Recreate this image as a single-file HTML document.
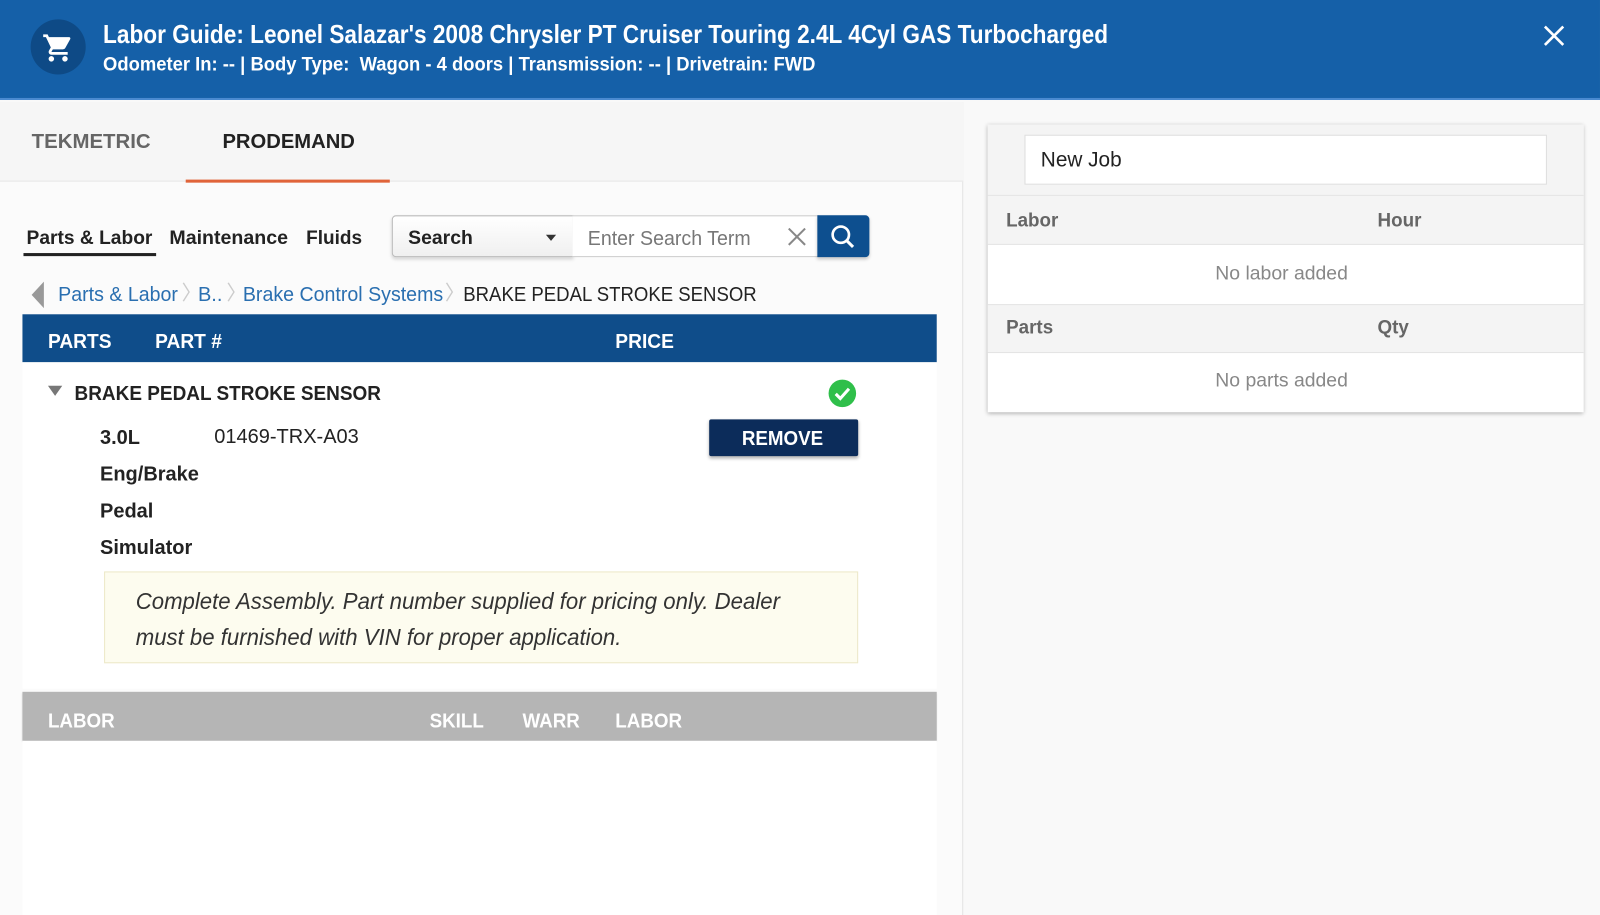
<!DOCTYPE html>
<html><head><meta charset="utf-8"><style>
*{margin:0;padding:0;box-sizing:border-box}
body{width:1600px;height:897px;overflow:hidden;background:#f9f9f9;font-family:"Liberation Sans",sans-serif;position:relative}
#w{position:absolute;left:0;top:0;width:1568px;height:879px;transform:scale(1.0204);transform-origin:0 0}
.t{position:absolute;white-space:nowrap;transform-origin:0 50%;transform:scaleX(.98);line-height:1}
.b{font-weight:bold}
</style></head><body><div id="w">
<div style="position:absolute;left:0;top:0;width:1568px;height:98px;background:#1560a8;border-bottom:2px solid #4a8ad0"></div>
<div style="position:absolute;left:30px;top:19px;width:54px;height:54px;border-radius:50%;background:#0e4a86"></div>
<svg style="position:absolute;left:41px;top:31px" width="32" height="32" viewBox="0 0 24 24"><path fill="#fff" d="M7 18c-1.1 0-2 .9-2 2s.9 2 2 2 2-.9 2-2-.9-2-2-2zM1 2v2h2l3.6 7.6-1.35 2.4C5.1 14.3 5 14.6 5 15c0 1.1.9 2 2 2h12v-2H7.4c-.14 0-.25-.11-.25-.25l.03-.12.9-1.630h7.45c.75 0 1.410-.41 1.75-1.03l3.58-6.49A1 1 0 0 0 20 4H5.2l-.94-2H1zm16 16c-1.1 0-2 .9-2 2s.9 2 2 2 2-.9 2-2-.9-2-2-2z"/></svg>
<div class="t b" style="left:101px;top:22px;font-size:25px;color:#fff;transform:scaleX(.887)">Labor Guide: Leonel Salazar's 2008 Chrysler PT Cruiser Touring 2.4L 4Cyl GAS Turbocharged</div>
<div class="t b" style="left:101px;top:54px;font-size:19px;color:#fff;transform:scaleX(.95)">Odometer In: -- | Body Type:&nbsp; Wagon - 4 doors | Transmission: -- | Drivetrain: FWD</div>
<svg style="position:absolute;left:1511px;top:23px" width="24" height="24" viewBox="0 0 24 24"><path d="M3 3L21 21M21 3L3 21" stroke="#fff" stroke-width="2.6"/></svg>
<div style="position:absolute;left:0;top:100px;width:944px;height:797px;background:#fbfbfb;border-right:1px solid #e3e3e3"></div>
<div style="position:absolute;left:0;top:100px;width:944px;height:78px;background:#f6f6f6;border-bottom:1px solid #e8e8e8"></div>
<div class="t b" style="left:31px;top:129px;font-size:20px;color:#666;transform:scaleX(1)">TEKMETRIC</div>
<div class="t b" style="left:218px;top:129px;font-size:20px;color:#222;transform:scaleX(.99)">PRODEMAND</div>
<div style="position:absolute;left:182px;top:176px;width:200px;height:3px;background:#e0643a"></div>
<div class="t b" style="left:26px;top:224px;font-size:19px;color:#222;transform:scaleX(.99)">Parts &amp; Labor</div>
<div style="position:absolute;left:23px;top:248px;width:130px;height:3px;background:#222"></div>
<div class="t b" style="left:166px;top:224px;font-size:19px;color:#222;transform:scaleX(1.01)">Maintenance</div>
<div class="t b" style="left:300px;top:224px;font-size:19px;color:#222;transform:scaleX(.98)">Fluids</div>
<div style="position:absolute;left:384px;top:211px;width:178px;height:41px;background:linear-gradient(#fff,#f0f0f0);border:1px solid #bbb;border-radius:4px 0 0 4px;box-shadow:0 2px 3px rgba(0,0,0,.15)"></div>
<div class="t b" style="left:400px;top:224px;font-size:19px;color:#222;transform:scaleX(1)">Search</div>
<div style="position:absolute;left:535px;top:230px;border:5px solid transparent;border-top:6px solid #333"></div>
<div style="position:absolute;left:561px;top:211px;width:242px;height:41px;background:#fff;border:1px solid #ccc;border-left:none"></div>
<div class="t" style="left:576px;top:224px;font-size:20px;color:#777;transform:scaleX(.96)">Enter Search Term</div>
<svg style="position:absolute;left:771px;top:222px" width="20" height="20" viewBox="0 0 20 20"><path d="M2 2L18 18M18 2L2 18" stroke="#888" stroke-width="2"/></svg>
<div style="position:absolute;left:801px;top:211px;width:51px;height:41px;background:#0d4f8f;border-radius:0 4px 4px 0;box-shadow:0 2px 3px rgba(0,0,0,.2)"></div>
<svg style="position:absolute;left:813px;top:219px" width="26" height="26" viewBox="0 0 26 26"><circle cx="11" cy="11" r="8" fill="none" stroke="#fff" stroke-width="2.6"/><path d="M17 17L23 23" stroke="#fff" stroke-width="3"/></svg>
<div style="position:absolute;left:31px;top:276px;border:9px solid transparent;border-right:12px solid #999;border-left:none;height:0;width:0;border-top-width:13px;border-bottom-width:13px"></div>
<div class="t" style="left:57px;top:279px;font-size:20px;color:#2a6fb0;transform:scaleX(.96)">Parts &amp; Labor</div>
<div class="t" style="left:178px;top:278px;font-size:20px;color:#ccc">〉</div>
<div class="t" style="left:194px;top:279px;font-size:20px;color:#2a6fb0">B..</div>
<div class="t" style="left:222px;top:278px;font-size:20px;color:#ccc">〉</div>
<div class="t" style="left:238px;top:279px;font-size:20px;color:#2a6fb0;transform:scaleX(.96)">Brake Control Systems</div>
<div class="t" style="left:436px;top:278px;font-size:20px;color:#ccc">〉</div>
<div class="t" style="left:454px;top:279px;font-size:20px;color:#222;transform:scaleX(.91)">BRAKE PEDAL STROKE SENSOR</div>
<div style="position:absolute;left:22px;top:308px;width:896px;height:47px;background:#0f4d8a"></div>
<div class="t b" style="left:47px;top:325px;font-size:20px;color:#fff;transform:scaleX(.94)">PARTS</div>
<div class="t b" style="left:152px;top:325px;font-size:20px;color:#fff;transform:scaleX(.94)">PART #</div>
<div class="t b" style="left:603px;top:325px;font-size:20px;color:#fff;transform:scaleX(.94)">PRICE</div>
<div style="position:absolute;left:22px;top:355px;width:896px;height:320px;background:#fff"></div>
<div style="position:absolute;left:47px;top:378px;border:7px solid transparent;border-top:10px solid #777;border-bottom:none"></div>
<div class="t b" style="left:73px;top:376px;font-size:20px;color:#222;transform:scaleX(.93)">BRAKE PEDAL STROKE SENSOR</div>
<div style="position:absolute;left:812px;top:372px;width:27px;height:27px;border-radius:50%;background:#2fbf4a"></div>
<svg style="position:absolute;left:812px;top:372px" width="27" height="27" viewBox="0 0 27 27"><path d="M7 14l4.5 4.5L20 9" fill="none" stroke="#fff" stroke-width="3"/></svg>
<div class="t b" style="left:98px;top:419px;font-size:20px;color:#222">3.0L</div>
<div class="t" style="left:210px;top:418px;font-size:20px;color:#222">01469-TRX-A03</div>
<div style="position:absolute;left:695px;top:411px;width:146px;height:36px;background:#0c2c5a;border-radius:2px;box-shadow:0 2px 3px rgba(0,0,0,.3)"></div>
<div class="t b" style="left:727px;top:420px;font-size:20px;color:#fff;transform:scaleX(.92)">REMOVE</div>
<div class="t b" style="left:98px;top:455px;font-size:20px;color:#222">Eng/Brake</div>
<div class="t b" style="left:98px;top:491px;font-size:20px;color:#222">Pedal</div>
<div class="t b" style="left:98px;top:527px;font-size:20px;color:#222">Simulator</div>
<div style="position:absolute;left:102px;top:560px;width:739px;height:90px;background:#fdfcef;border:1px solid #ece8c8"></div>
<div class="t" style="left:133px;top:578px;font-size:23px;color:#333;font-style:italic;transform:scaleX(.945)">Complete Assembly. Part number supplied for pricing only. Dealer</div>
<div class="t" style="left:133px;top:613px;font-size:23px;color:#333;font-style:italic;transform:scaleX(.945)">must be furnished with VIN for proper application.</div>
<div style="position:absolute;left:22px;top:678px;width:896px;height:48px;background:#b5b5b5;box-shadow:0 1px 2px rgba(0,0,0,.2)"></div>
<div class="t b" style="left:47px;top:697px;font-size:20px;color:#fff;transform:scaleX(.92)">LABOR</div>
<div class="t b" style="left:421px;top:697px;font-size:20px;color:#fff;transform:scaleX(.92)">SKILL</div>
<div class="t b" style="left:512px;top:697px;font-size:20px;color:#fff;transform:scaleX(.92)">WARR</div>
<div class="t b" style="left:603px;top:697px;font-size:20px;color:#fff;transform:scaleX(.92)">LABOR</div>
<div style="position:absolute;left:22px;top:726px;width:896px;height:171px;background:#fff"></div>
<div style="position:absolute;left:968px;top:122px;width:584px;height:282px;background:#fff;box-shadow:0 1px 4px rgba(0,0,0,.3)"></div>
<div style="position:absolute;left:968px;top:122px;width:584px;height:70px;background:#f4f4f4;border-bottom:1px solid #e4e4e4"></div>
<div style="position:absolute;left:1004px;top:132px;width:512px;height:49px;background:#fff;border:1px solid #ddd"></div>
<div class="t" style="left:1020px;top:146px;font-size:21px;color:#222;transform:scaleX(.97)">New Job</div>
<div style="position:absolute;left:968px;top:192px;width:584px;height:48px;background:#f4f4f4;border-bottom:1px solid #e4e4e4"></div>
<div class="t b" style="left:986px;top:207px;font-size:19px;color:#666;transform:scaleX(.97)">Labor</div>
<div class="t b" style="left:1350px;top:207px;font-size:19px;color:#666;transform:scaleX(.97)">Hour</div>
<div class="t" style="left:1191px;top:259px;font-size:19px;color:#888;transform:scaleX(1.0)">No labor added</div>
<div style="position:absolute;left:968px;top:298px;width:584px;height:48px;background:#f4f4f4;border-top:1px solid #e4e4e4;border-bottom:1px solid #e4e4e4"></div>
<div class="t b" style="left:986px;top:312px;font-size:19px;color:#666;transform:scaleX(.97)">Parts</div>
<div class="t b" style="left:1350px;top:312px;font-size:19px;color:#666;transform:scaleX(.97)">Qty</div>
<div class="t" style="left:1191px;top:364px;font-size:19px;color:#888;transform:scaleX(1.0)">No parts added</div>
</div></body></html>
